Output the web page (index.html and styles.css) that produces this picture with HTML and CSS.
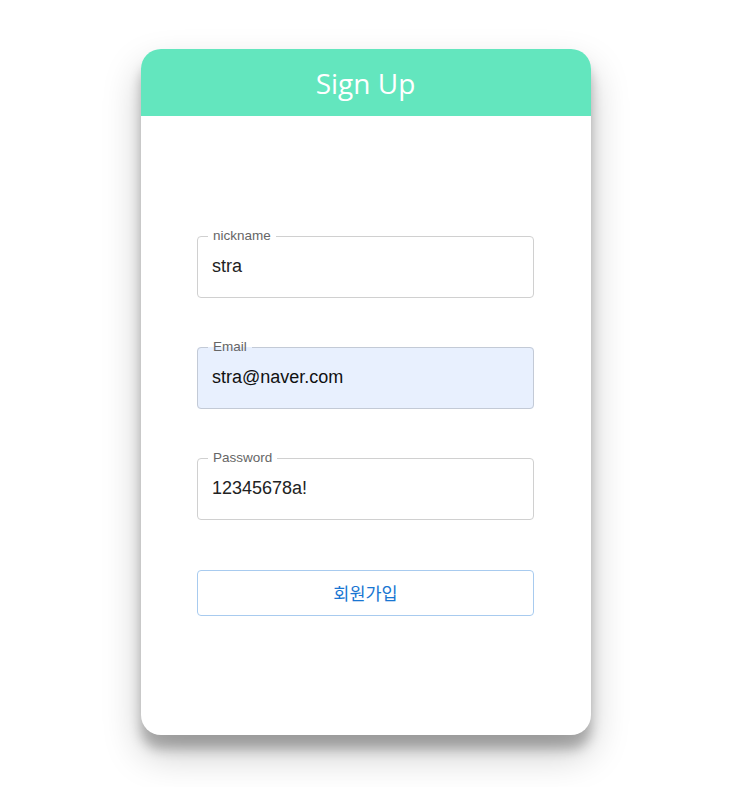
FILE: index.html
```html
<!DOCTYPE html>
<html lang="ko">
<head>
<meta charset="utf-8">
<title>Sign Up</title>
<link rel="stylesheet" href="styles.css">
</head>
<body>
<div class="card">
  <div class="card-header">Sign Up</div>
  <form class="card-body">
    <fieldset class="field">
      <legend>nickname</legend>
      <div class="value">stra</div>
    </fieldset>
    <fieldset class="field autofill">
      <legend>Email</legend>
      <div class="value">stra@naver.com</div>
    </fieldset>
    <fieldset class="field">
      <legend>Password</legend>
      <div class="value">12345678a!</div>
    </fieldset>
    <button type="button" class="submit">회원가입</button>
  </form>
</div>
</body>
</html>
```
FILE: styles.css
```css
html, body {
  margin: 0;
  padding: 0;
  background: #ffffff;
}
body {
  min-height: 100vh;
  box-sizing: border-box;
  display: flex;
  justify-content: center;
  align-items: flex-start;
  padding-top: 49px;
  padding-left: 2px;
  font-family: "Liberation Sans", Arial, sans-serif;
}
.card {
  width: 450px;
  height: 686px;
  background: #ffffff;
  border-radius: 20px;
  overflow: hidden;
  box-shadow: 0 19px 38px rgba(0, 0, 0, 0.22), 0 14px 12px rgba(0, 0, 0, 0.25);
  display: flex;
  flex-direction: column;
}
.card-header {
  height: 67px;
  background: #63e6be;
  color: #ffffff;
  font-family: "Open Sans", "Noto Sans", sans-serif;
  font-size: 28px;
  display: flex;
  align-items: center;
  justify-content: center;
}
.card-body {
  width: 337px;
  margin: 0 auto;
  padding-top: 112px;
  display: flex;
  flex-direction: column;
  gap: 41px;
}
.field {
  margin: 0;
  padding: 0 10px;
  border: 1px solid #d0d0d0;
  border-radius: 4px;
  height: 70px;
  box-sizing: border-box;
  min-width: 0;
}
.field legend {
  padding: 0 5px;
  font-size: 13.5px;
  line-height: 16px;
  color: #666666;
}
.field .value {
  padding: 11px 0 0 4px;
  font-size: 18px;
  line-height: 22px;
  color: #222222;
}
.field.autofill {
  background: #e8f0fe;
  border-color: #c3cad6;
}
.field.autofill .value {
  color: #111111;
}
.submit {
  margin-top: 9px;
  height: 46px;
  width: 100%;
  background: #ffffff;
  border: 1px solid #a8cbef;
  border-radius: 4px;
  color: #1976d2;
  font-family: "Noto Sans CJK KR", "Noto Sans", sans-serif;
  font-size: 17.5px;
  padding: 0 0 2px;
}
```
